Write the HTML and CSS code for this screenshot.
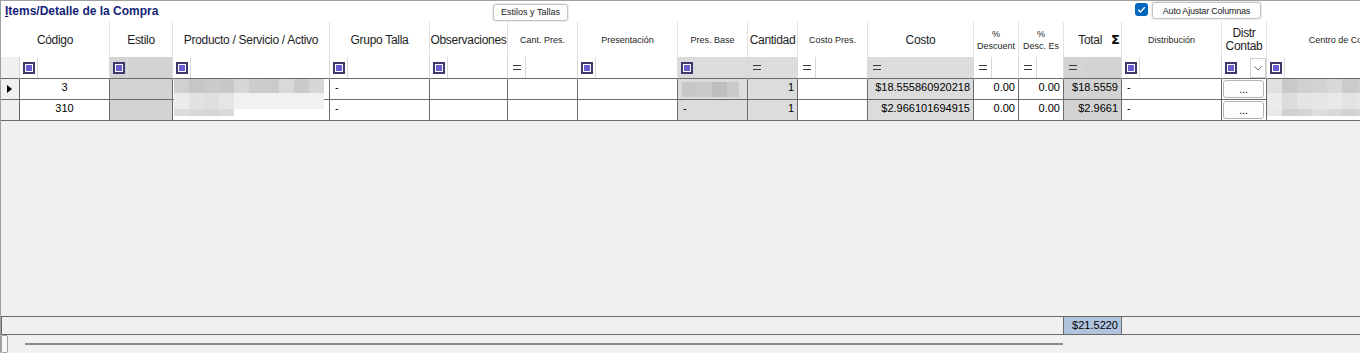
FILE: index.html
```html
<!DOCTYPE html>
<html lang="es">
<head>
  <meta charset="UTF-8" />
  <meta name="viewport" content="width=device-width, initial-scale=1.0"/>
  <title>Items/Detalle de la Compra</title>
  <link rel="stylesheet" href="styles.css">
</head>
<body>
  <div class="panel">

    <div class="topbar">
      <div class="title"><u>I</u>tems/Detalle de la Compra</div>
      <div><button class="btn btn-estilos">Estilos y Tallas</button></div>
      <div class="auto">
        <span class="check">
          <svg width="13" height="13" viewBox="0 0 13 13"><path d="M3.2 6.8 L5.4 9 L9.8 4.2" fill="none" stroke="#fff" stroke-width="1.3"/></svg>
        </span>
        <button class="btn btn-auto">Auto Ajustar Columnas</button>
      </div>
    </div>

    <div class="grid">
      <!-- header row -->
      <div class="hd span2">Código</div>
      <div class="hd">Estilo</div>
      <div class="hd">Producto / Servicio / Activo</div>
      <div class="hd">Grupo Talla</div>
      <div class="hd">Observaciones</div>
      <div class="hd sm">Cant. Pres.</div>
      <div class="hd sm">Presentación</div>
      <div class="hd sm">Pres. Base</div>
      <div class="hd">Cantidad</div>
      <div class="hd sm">Costo Pres.</div>
      <div class="hd">Costo</div>
      <div class="hd sm">%<br>Descuent</div>
      <div class="hd sm">%<br>Desc. Es</div>
      <div class="hd hd-total"><span>Total</span><span class="sigma">Σ</span></div>
      <div class="hd sm">Distribución</div>
      <div class="hd two">Distr<br>Contab</div>
      <div class="hd sm">Centro de Costo</div>

      <!-- filter row -->
      <div class="fl rh"></div>
      <div class="fl"><span class="op"><i class="fi"></i></span></div>
      <div class="fl ro2"><span class="op"><i class="fi"></i></span></div>
      <div class="fl"><span class="op"><i class="fi"></i></span></div>
      <div class="fl"><span class="op"><i class="fi"></i></span></div>
      <div class="fl"><span class="op"><i class="fi"></i></span></div>
      <div class="fl"><span class="op eq"><i class="eqs"></i></span></div>
      <div class="fl"><span class="op"><i class="fi"></i></span></div>
      <div class="fl ro"><span class="op"><i class="fi"></i></span></div>
      <div class="fl ro"><span class="op eq"><i class="eqs"></i></span></div>
      <div class="fl"><span class="op eq"><i class="eqs"></i></span></div>
      <div class="fl ro"><span class="op eq"><i class="eqs"></i></span></div>
      <div class="fl"><span class="op eq"><i class="eqs"></i></span></div>
      <div class="fl"><span class="op eq"><i class="eqs"></i></span></div>
      <div class="fl ro2"><span class="op eq"><i class="eqs"></i></span></div>
      <div class="fl"><span class="op"><i class="fi"></i></span></div>
      <div class="fl">
        <i class="fi fi-solo"></i>
        <span class="dd"><svg width="8" height="5" viewBox="0 0 8 5"><path d="M0.5 0.5 L4 4 L7.5 0.5" fill="none" stroke="#707070" stroke-width="1"/></svg></span>
      </div>
      <div class="fl"><span class="op"><i class="fi"></i></span></div>

      <!-- row 1 -->
      <div class="c rh"><i class="cur"></i></div>
      <div class="c ctr">3</div>
      <div class="c ro2"></div>
      <div class="c"></div>
      <div class="c lf">-</div>
      <div class="c"></div>
      <div class="c"></div>
      <div class="c"></div>
      <div class="c ro pb"><i class="pb-blur"></i></div>
      <div class="c ro rt">1</div>
      <div class="c"></div>
      <div class="c ro rt">$18.555860920218</div>
      <div class="c rt">0.00</div>
      <div class="c rt">0.00</div>
      <div class="c ro2 rt">$18.5559</div>
      <div class="c lf">-</div>
      <div class="c btn-cell"><span class="dots">...</span></div>
      <div class="c"></div>

      <!-- row 2 -->
      <div class="c rh"></div>
      <div class="c ctr">310</div>
      <div class="c ro2"></div>
      <div class="c"></div>
      <div class="c lf">-</div>
      <div class="c"></div>
      <div class="c"></div>
      <div class="c"></div>
      <div class="c ro lf">-</div>
      <div class="c ro rt">1</div>
      <div class="c"></div>
      <div class="c ro rt">$2.966101694915</div>
      <div class="c rt">0.00</div>
      <div class="c rt">0.00</div>
      <div class="c ro2 rt">$2.9661</div>
      <div class="c lf">-</div>
      <div class="c btn-cell"><span class="dots">...</span></div>
      <div class="c"></div>

      <!-- hidden (pixelated) values drawn over the rows -->
      <div class="blur blur-prod">
        <i class="band prod-a"></i>
        <i class="band prod-b"></i>
        <i class="band prod-c"></i>
      </div>
      <div class="blur blur-centro">
        <i class="band cc-a"></i>
        <i class="band cc-b"></i>
        <i class="band cc-c"></i>
      </div>
    </div>

    <div class="empty"></div>

    <div class="footer">
      <div class="foot-spacer"></div>
      <div class="foot-total">$21.5220</div>
    </div>

    <div class="hscroll">
      <span class="hs-box"></span>
      <span class="hs-thumb"></span>
    </div>

  </div>
</body>
</html>
```

FILE: styles.css
```css
* {
  margin: 0;
  padding: 0;
  box-sizing: border-box;
}

html, body {
  overflow: hidden;
}

body {
  font-family: 'Liberation Sans', Arial, sans-serif;
  background-color: #f0f0f0;
  color: #000;
}

.panel {
  width: 1360px;
  height: 353px;
  overflow: hidden;
  border-top: 1px solid #a0a0a0;
  border-left: 1px solid #a0a0a0;
  background-color: #f0f0f0;
}

/* top bar */
.topbar {
  display: grid;
  grid-template-columns: 492px 642px auto;
  height: 21px;
  background: #fff;
}
.title {
  padding-left: 4px;
  font-size: 12px;
  font-weight: bold;
  line-height: 21px;
  color: #151f78;
  white-space: nowrap;
}
.btn {
  height: 17px;
  margin-top: 1px;
  font-family: inherit;
  font-size: 9px;
  color: #1a1a1a;
  background: #fdfdfd;
  border: 1px solid #c4c4c4;
  border-radius: 3px;
  box-shadow: 0 0 0 1px #ececec;
}
.btn-estilos {
  width: 75px;
}
.auto {
  display: flex;
  align-items: flex-start;
  gap: 4px;
}
.check {
  display: flex;
  width: 13px;
  height: 13px;
  margin-top: 2px;
  background: #0067c0;
  border-radius: 3px;
}
.btn-auto {
  width: 109px;
  letter-spacing: -0.2px;
}

/* grid */
.grid {
  position: relative;
  display: grid;
  grid-template-columns: 19px 90px 63px 157px 100px 78px 70px 100px 70px 50px 70px 106px 45px 45px 58px 100px 45px 150px;
  grid-template-rows: 35px 22px 21px 21px;
  width: max-content;
  background: #fff;
}

.hd {
  display: flex;
  align-items: center;
  justify-content: center;
  text-align: center;
  border-right: 1px solid #e2e2e2;
  font-size: 12px;
  letter-spacing: -0.3px;
  color: #1e1e1e;
  white-space: nowrap;
  overflow: hidden;
}
.hd.span2 {
  grid-column: span 2;
}
.hd.sm {
  font-size: 9px;
  letter-spacing: 0;
  line-height: 12px;
}
.hd.two {
  line-height: 13px;
}
.hd-total {
  justify-content: flex-end;
  gap: 9px;
  padding-right: 1px;
}
.sigma {
  font-family: 'DejaVu Sans', sans-serif;
  font-weight: bold;
  font-size: 13px;
  letter-spacing: 0;
  color: #000;
}

/* filter row */
.fl {
  display: flex;
  align-items: center;
  background: #fff;
  border-right: 1px solid #d9d9d9;
  border-bottom: 1px solid #6a6a6a;
}
.op {
  display: flex;
  align-items: center;
  flex-shrink: 0;
  width: 18px;
  height: 100%;
  padding-left: 3px;
  border-right: 1px solid #d9d9d9;
}
.op.eq {
  padding-left: 5px;
}
.fi {
  display: block;
  width: 12px;
  height: 12px;
  padding: 1px;
  border: 2px solid #3b3b6b;
  background: #fff;
}
.fi::after {
  content: '';
  display: block;
  width: 100%;
  height: 100%;
  background: #6a5fd0;
}
.fi-solo {
  margin-left: 3px;
}
.eqs {
  display: block;
  width: 8px;
  height: 5px;
  border-top: 1px solid #3a3a3a;
  border-bottom: 1px solid #3a3a3a;
}
.dd {
  display: flex;
  align-items: center;
  justify-content: center;
  align-self: flex-start;
  width: 16px;
  height: 20px;
  margin-top: 1px;
  margin-left: auto;
  border: 1px solid #cfcfcf;
  background: #fff;
}

/* data rows */
.c {
  height: 21px;
  padding: 0 3px;
  font-size: 11px;
  line-height: 16px;
  white-space: nowrap;
  overflow: hidden;
  background: #fff;
  border-right: 1px solid #6a6a6a;
  border-bottom: 1px solid #6a6a6a;
}
.c.ctr { text-align: center; }
.c.rt { text-align: right; }
.c.lf { padding-left: 5px; }

.ro { background: #dcdcdc; }
.ro2 { background: #d3d3d3; }
.rh { background: #f0f0f0; padding: 0; }

.cur {
  display: block;
  width: 0;
  height: 0;
  margin: 6px 0 0 6px;
  border-left: 5px solid #000;
  border-top: 4px solid transparent;
  border-bottom: 4px solid transparent;
}

.c.pb { padding-left: 4px; }
.pb-blur {
  display: block;
  width: 57px;
  height: 15px;
  margin-top: 3px;
  background: linear-gradient(to right, #c8c8c8 0 15px, #cacaca 15px 30px, #bebebe 30px 45px, #c9c9c9 45px 57px);
}

.btn-cell { padding: 0 1px; }
.dots {
  display: block;
  width: 41px;
  height: 18px;
  margin-top: 1px;
  text-align: center;
  background: #fdfdfd;
  border: 1px solid #b4b4b4;
  border-radius: 3px;
}

/* pixelated values */
.blur {
  position: absolute;
  top: 57px;
  display: flex;
  flex-direction: column;
  align-items: flex-start;
}
.blur-prod { left: 173px; }
.blur-centro { left: 1266px; }
.band { display: block; }

.prod-a {
  width: 150px;
  height: 14px;
  background: linear-gradient(to right, #d0d0d0 0 15px, #c6c6c6 15px 30px, #cacaca 30px 45px, #c8c8c8 45px 60px, #d6d6d6 60px 75px, #cdcdcd 75px 90px, #cbcbcb 90px 105px, #dbd9d7 105px 120px, #cacaca 120px 135px, #d6d6d6 135px 150px);
}
.prod-b {
  width: 150px;
  height: 16px;
  background: linear-gradient(to right, #ebebeb 0 15px, #e2e2e2 15px 30px, #dfdfdf 30px 45px, #e5e5e5 45px 60px, #f1f1f1 60px 150px);
}
.prod-c {
  width: 60px;
  height: 7px;
  background: linear-gradient(to right, #dcdcdc 0 15px, #d8d8d8 15px 30px, #d6d6d6 30px 45px, #dadada 45px 60px);
}
.cc-a {
  width: 105px;
  height: 14px;
  background: linear-gradient(to right, #e0e0de 0 15px, #c9c9c9 15px 30px, #d0d0d0 30px 45px, #d3d3d3 45px 60px, #d8d8d8 60px 75px, #cbcbcb 75px 90px, #d0d0d0 90px 105px);
}
.cc-b {
  width: 105px;
  height: 16px;
  background: linear-gradient(to right, #ebebeb 0 15px, #dcdcdc 15px 30px, #e4e4e4 30px 45px, #e6e6e6 45px 60px, #e9e9e9 60px 75px, #e3e3e3 75px 90px, #e6e6e6 90px 105px);
}
.cc-c {
  width: 105px;
  height: 7px;
  background: linear-gradient(to right, #e8e8e8 0 15px, #d0d0d0 15px 30px, #d4d4d4 30px 45px, #dedede 45px 60px, #d8d8d8 60px 75px, #d2d2d2 75px 90px, #d6d6d6 90px 105px);
}

/* below the rows */
.empty {
  height: 195px;
}

.footer {
  display: flex;
  height: 19px;
  border-top: 1px solid #6a6a6a;
  border-bottom: 1px solid #6a6a6a;
}
.foot-spacer {
  width: 1063px;
  border-left: 1px solid #6a6a6a;
  border-right: 1px solid #6a6a6a;
}
.foot-total {
  width: 58px;
  padding-right: 3px;
  font-size: 11px;
  line-height: 17px;
  text-align: right;
  background: #b0c4de;
  border-right: 1px solid #6a6a6a;
}

.hscroll {
  display: flex;
  align-items: center;
  height: 18px;
}
.hs-box {
  width: 7px;
  height: 18px;
  background: #fafafa;
  border: 1px solid #a0a0a0;
  border-radius: 2px;
}
.hs-thumb {
  width: 1038px;
  height: 2px;
  margin-left: 17px;
  background: #8a8a8a;
}
```
